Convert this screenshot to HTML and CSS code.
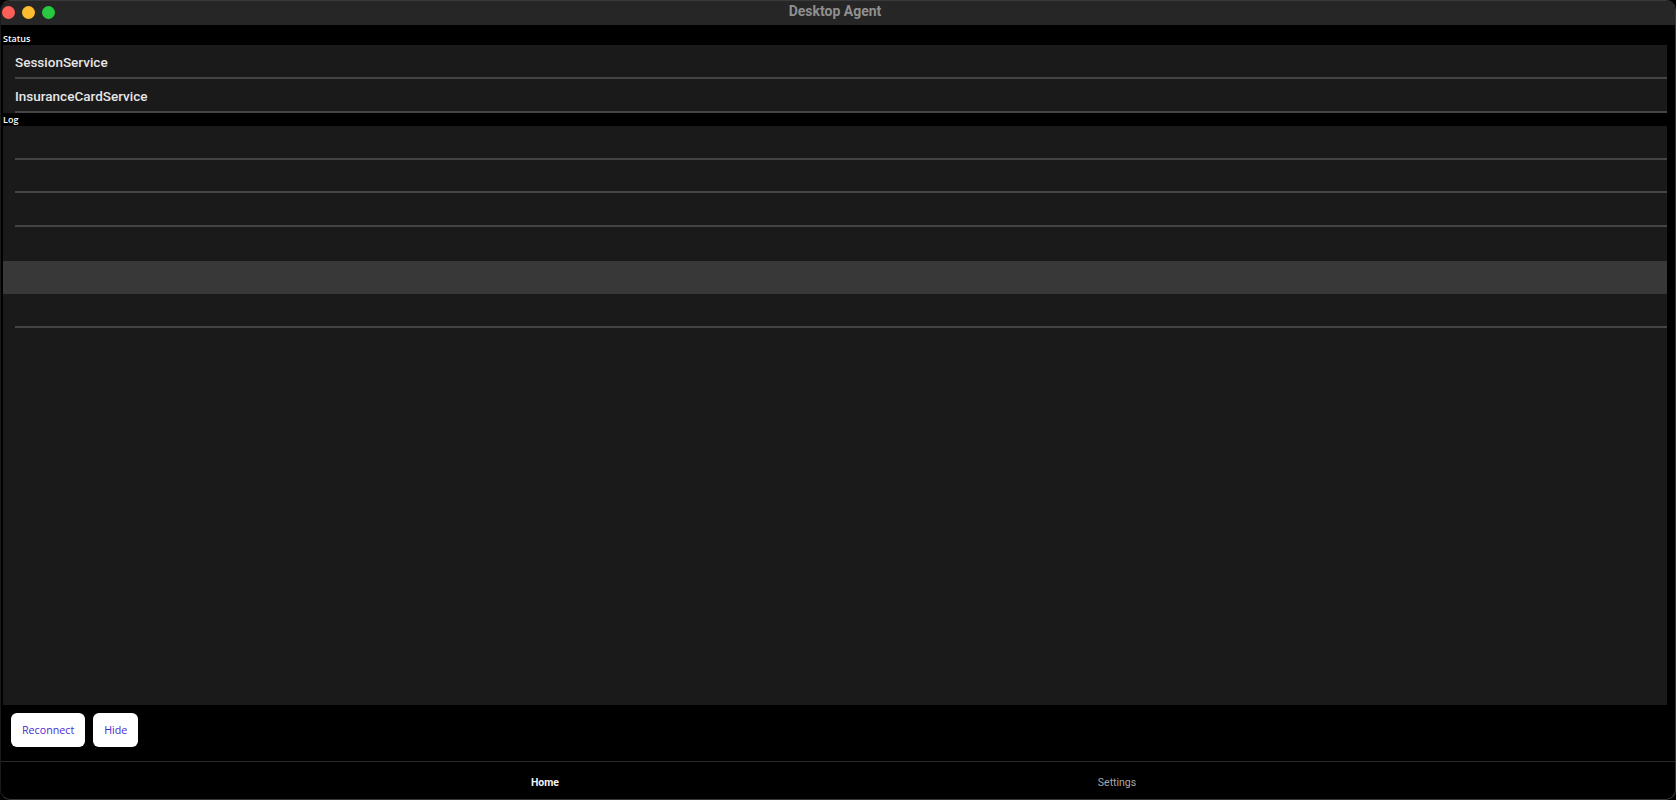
FILE: index.html
```html
<!DOCTYPE html>
<html lang="en">
<head>
<meta charset="utf-8">
<title>Desktop Agent</title>
<link rel="stylesheet" href="styles.css">
</head>
<body>
<div class="window">
  <header class="titlebar">
    <div class="lights">
      <span class="light red"></span>
      <span class="light yellow"></span>
      <span class="light green"></span>
    </div>
    <div class="title">Desktop Agent</div>
    <div class="spacer"></div>
  </header>
  <main class="content">
    <div class="section-label">Status</div>
    <div class="list status-list">
      <div class="row"><div class="row-inner">SessionService</div></div>
      <div class="row"><div class="row-inner">InsuranceCardService</div></div>
    </div>
    <div class="section-label">Log</div>
    <div class="list log-list">
      <div class="row"><div class="row-inner"></div></div>
      <div class="row"><div class="row-inner"></div></div>
      <div class="row"><div class="row-inner"></div></div>
      <div class="row"><div class="row-inner no-sep"></div></div>
      <div class="row selected"><div class="row-inner no-sep"></div></div>
      <div class="row"><div class="row-inner"></div></div>
    </div>
    <div class="actions">
      <button class="btn">Reconnect</button>
      <button class="btn">Hide</button>
    </div>
  </main>
  <nav class="tabbar">
    <div class="tab active">Home</div>
    <div class="tab">Settings</div>
  </nav>
</div>
</body>
</html>
```
FILE: styles.css
```css
html, body {
  margin: 0;
  padding: 0;
  background: #000;
}

.window {
  width: 1676px;
  height: 800px;
  box-sizing: border-box;
  border: 1px solid #3a3a3a;
  border-left-color: #1a1a1a;
  border-radius: 10px;
  overflow: hidden;
  background: #000;
  display: flex;
  flex-direction: column;
}

.titlebar {
  height: 24px;
  flex: 0 0 24px;
  background: #262626;
  display: grid;
  grid-template-columns: 1fr auto 1fr;
  align-items: center;
}

.lights {
  display: flex;
  gap: 7px;
  padding-left: 1px;
  margin-top: -1px;
}

.light {
  width: 13px;
  height: 13px;
  border-radius: 50%;
  display: block;
}

.red { background: #ff5f57; }
.yellow { background: #febc2e; }
.green { background: #28c840; }

.title {
  font-family: Roboto, "Liberation Sans", sans-serif;
  font-weight: 700;
  font-size: 14px;
  line-height: 16px;
  color: #8f8f8f;
  margin-top: -4px;
  margin-right: 6px;
}

.content {
  flex: 1 1 auto;
  display: flex;
  flex-direction: column;
  padding: 7px 8px 0 2px;
  min-height: 0;
}

.section-label {
  font-family: "Open Sans", "Noto Sans", sans-serif;
  font-weight: 600;
  font-size: 9px;
  line-height: 13px;
  height: 13px;
  color: #ffffff;
}

.list {
  background: #1a1a1a;
}

.log-list {
  flex: 1 1 auto;
}

.row {
  height: 33.7px;
  padding-left: 12px;
  box-sizing: border-box;
}

.status-list .row {
  height: 34px;
}

.row-inner {
  height: 100%;
  box-sizing: border-box;
  border-bottom: 2px solid #444444;
  display: flex;
  align-items: center;
  font-family: Roboto, "Liberation Sans", sans-serif;
  font-weight: 500;
  font-size: 13.5px;
  color: #e6e6e6;
  padding-top: 2px;
}

.row-inner.no-sep {
  border-bottom-color: transparent;
}

.row.selected {
  background: #383838;
}

.actions {
  flex: 0 0 auto;
  display: flex;
  gap: 8px;
  padding: 8px 0 14px 8px;
}

.btn {
  height: 34px;
  padding: 0 11px;
  border: none;
  border-radius: 6px;
  background: #fff;
  color: #4a2bd4;
  font-family: "Open Sans", "Noto Sans", sans-serif;
  font-size: 10.7px;
  line-height: 34px;
}

.tabbar {
  flex: 0 0 37px;
  border-top: 1px solid #2a2a2a;
  display: flex;
  justify-content: center;
  padding-right: 14px;
}

.tab {
  width: 572px;
  text-align: center;
  font-family: Roboto, "Liberation Sans", sans-serif;
  font-size: 10.5px;
  line-height: 14px;
  padding-top: 14px;
  color: #a8a8a8;
}

.tab.active {
  color: #f2f2f2;
  font-weight: 700;
}
```
